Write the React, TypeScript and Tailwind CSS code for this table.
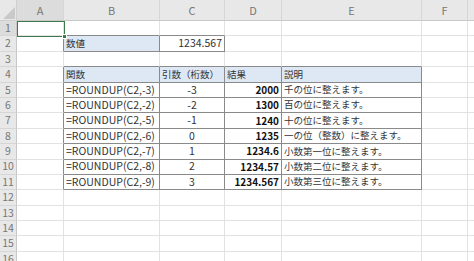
type Cell = {
  text?: string;
  align?: 'left' | 'center' | 'right';
  bold?: boolean;
  blue?: boolean;
  dark?: boolean; // dark right+bottom border
  jp?: boolean;
};

const cols = ['A', 'B', 'C', 'D', 'E', 'F', 'G'];

const table: Record<number, Record<string, Cell>> = {
  2: {
    B: { text: '数値', blue: true, dark: true, jp: true },
    C: { text: '1234.567', align: 'right', dark: true },
  },
  4: {
    B: { text: '関数', blue: true, dark: true, jp: true },
    C: { text: '引数（桁数）', blue: true, dark: true, jp: true },
    D: { text: '結果', blue: true, dark: true, jp: true },
    E: { text: '説明', blue: true, dark: true, jp: true },
  },
};

const rows: [string, string, string, string][] = [
  ['=ROUNDUP(C2,-3)', '-3', '2000', '千の位に整えます。'],
  ['=ROUNDUP(C2,-2)', '-2', '1300', '百の位に整えます。'],
  ['=ROUNDUP(C2,-5)', '-1', '1240', '十の位に整えます。'],
  ['=ROUNDUP(C2,-6)', '0', '1235', '一の位（整数）に整えます。'],
  ['=ROUNDUP(C2,-7)', '1', '1234.6', '小数第一位に整えます。'],
  ['=ROUNDUP(C2,-8)', '2', '1234.57', '小数第二位に整えます。'],
  ['=ROUNDUP(C2,-9)', '3', '1234.567', '小数第三位に整えます。'],
];

rows.forEach((r, i) => {
  table[5 + i] = {
    B: { text: r[0], dark: true },
    C: { text: r[1], align: 'center', dark: true },
    D: { text: r[2], align: 'right', bold: true, dark: true },
    E: { text: r[3], dark: true, jp: true },
  };
});

function cellAt(r: number, c: string): Cell | undefined {
  return table[r]?.[c];
}

function CellBox({ r, c }: { r: number; c: string }) {
  const cell = cellAt(r, c);
  const ci = cols.indexOf(c);
  const rightDark = cell?.dark || !!cellAt(r, cols[ci + 1])?.dark;
  const bottomDark = cell?.dark || !!cellAt(r + 1, c)?.dark;
  const align =
    cell?.align === 'right' ? 'justify-end' : cell?.align === 'center' ? 'justify-center' : 'justify-start';
  return (
    <div
      className={`flex items-center overflow-hidden whitespace-nowrap border-r border-b px-[2px] leading-none ${align} ${
        rightDark ? 'border-r-[#8a8a8a]' : 'border-r-[#e2e2e2]'
      } ${bottomDark ? 'border-b-[#8a8a8a]' : 'border-b-[#e2e2e2]'} ${cell?.blue ? 'bg-[#dde8f4]' : 'bg-white'} ${
        cell?.bold ? 'font-bold text-[#111]' : 'text-[#333]'
      } ${cell?.jp ? 'text-[9.5px]' : cell?.bold ? 'text-[10px]' : 'text-[10.5px]'}`}
    >
      {cell?.text}
    </div>
  );
}

export default function App() {
  const rowNums = Array.from({ length: 16 }, (_, i) => i + 1);
  return (
    <div
      className="relative h-[261px] w-[474px] overflow-hidden bg-white"
      style={{ fontFamily: '"Noto Sans CJK JP", "Noto Sans", sans-serif' }}
    >
      <div className="grid grid-cols-[17px_47px_96px_65px_57px_140px_46px_20px] grid-rows-[21px_repeat(16,15.4px)]">
        {/* corner */}
        <div className="relative border-r border-b border-[#cfcfcf] bg-[#e8e8e8]">
          <svg className="absolute right-[1px] bottom-[1px]" width="12" height="12" viewBox="0 0 12 12">
            <polygon points="12,0 12,12 0,12" fill="#c9c9c9" />
          </svg>
        </div>
        {cols.map((c) => (
          <div
            key={c}
            className={`flex items-center justify-center border-r border-b border-r-[#d6d6d6] border-b-[#c8c8c8] text-[11px] text-[#777] ${
              c === 'A' ? 'bg-[#dcdcdc]' : 'bg-[#e8e8e8]'
            }`}
          >
            {c === 'G' ? '' : c}
          </div>
        ))}
        {rowNums.map((r) => (
          <div key={r} className="contents">
            <div
              className={`flex items-center justify-center border-r border-b border-r-[#c8c8c8] border-b-[#d6d6d6] text-[10.5px] leading-none text-[#777] ${
                r === 1 ? 'bg-[#dcdcdc]' : 'bg-[#e8e8e8]'
              }`}
            >
              {r}
            </div>
            {cols.map((c) => (
              <CellBox key={c} r={r} c={c} />
            ))}
          </div>
        ))}
      </div>
      {/* selected A1 */}
      <div className="absolute top-[21px] left-[17px] h-[16.4px] w-[48px] border-[1.5px] border-[#3f7a4f]" />
      <div className="absolute top-[34px] left-[62px] h-[5px] w-[5px] border border-white bg-[#3f7a4f]" />
    </div>
  );
}
